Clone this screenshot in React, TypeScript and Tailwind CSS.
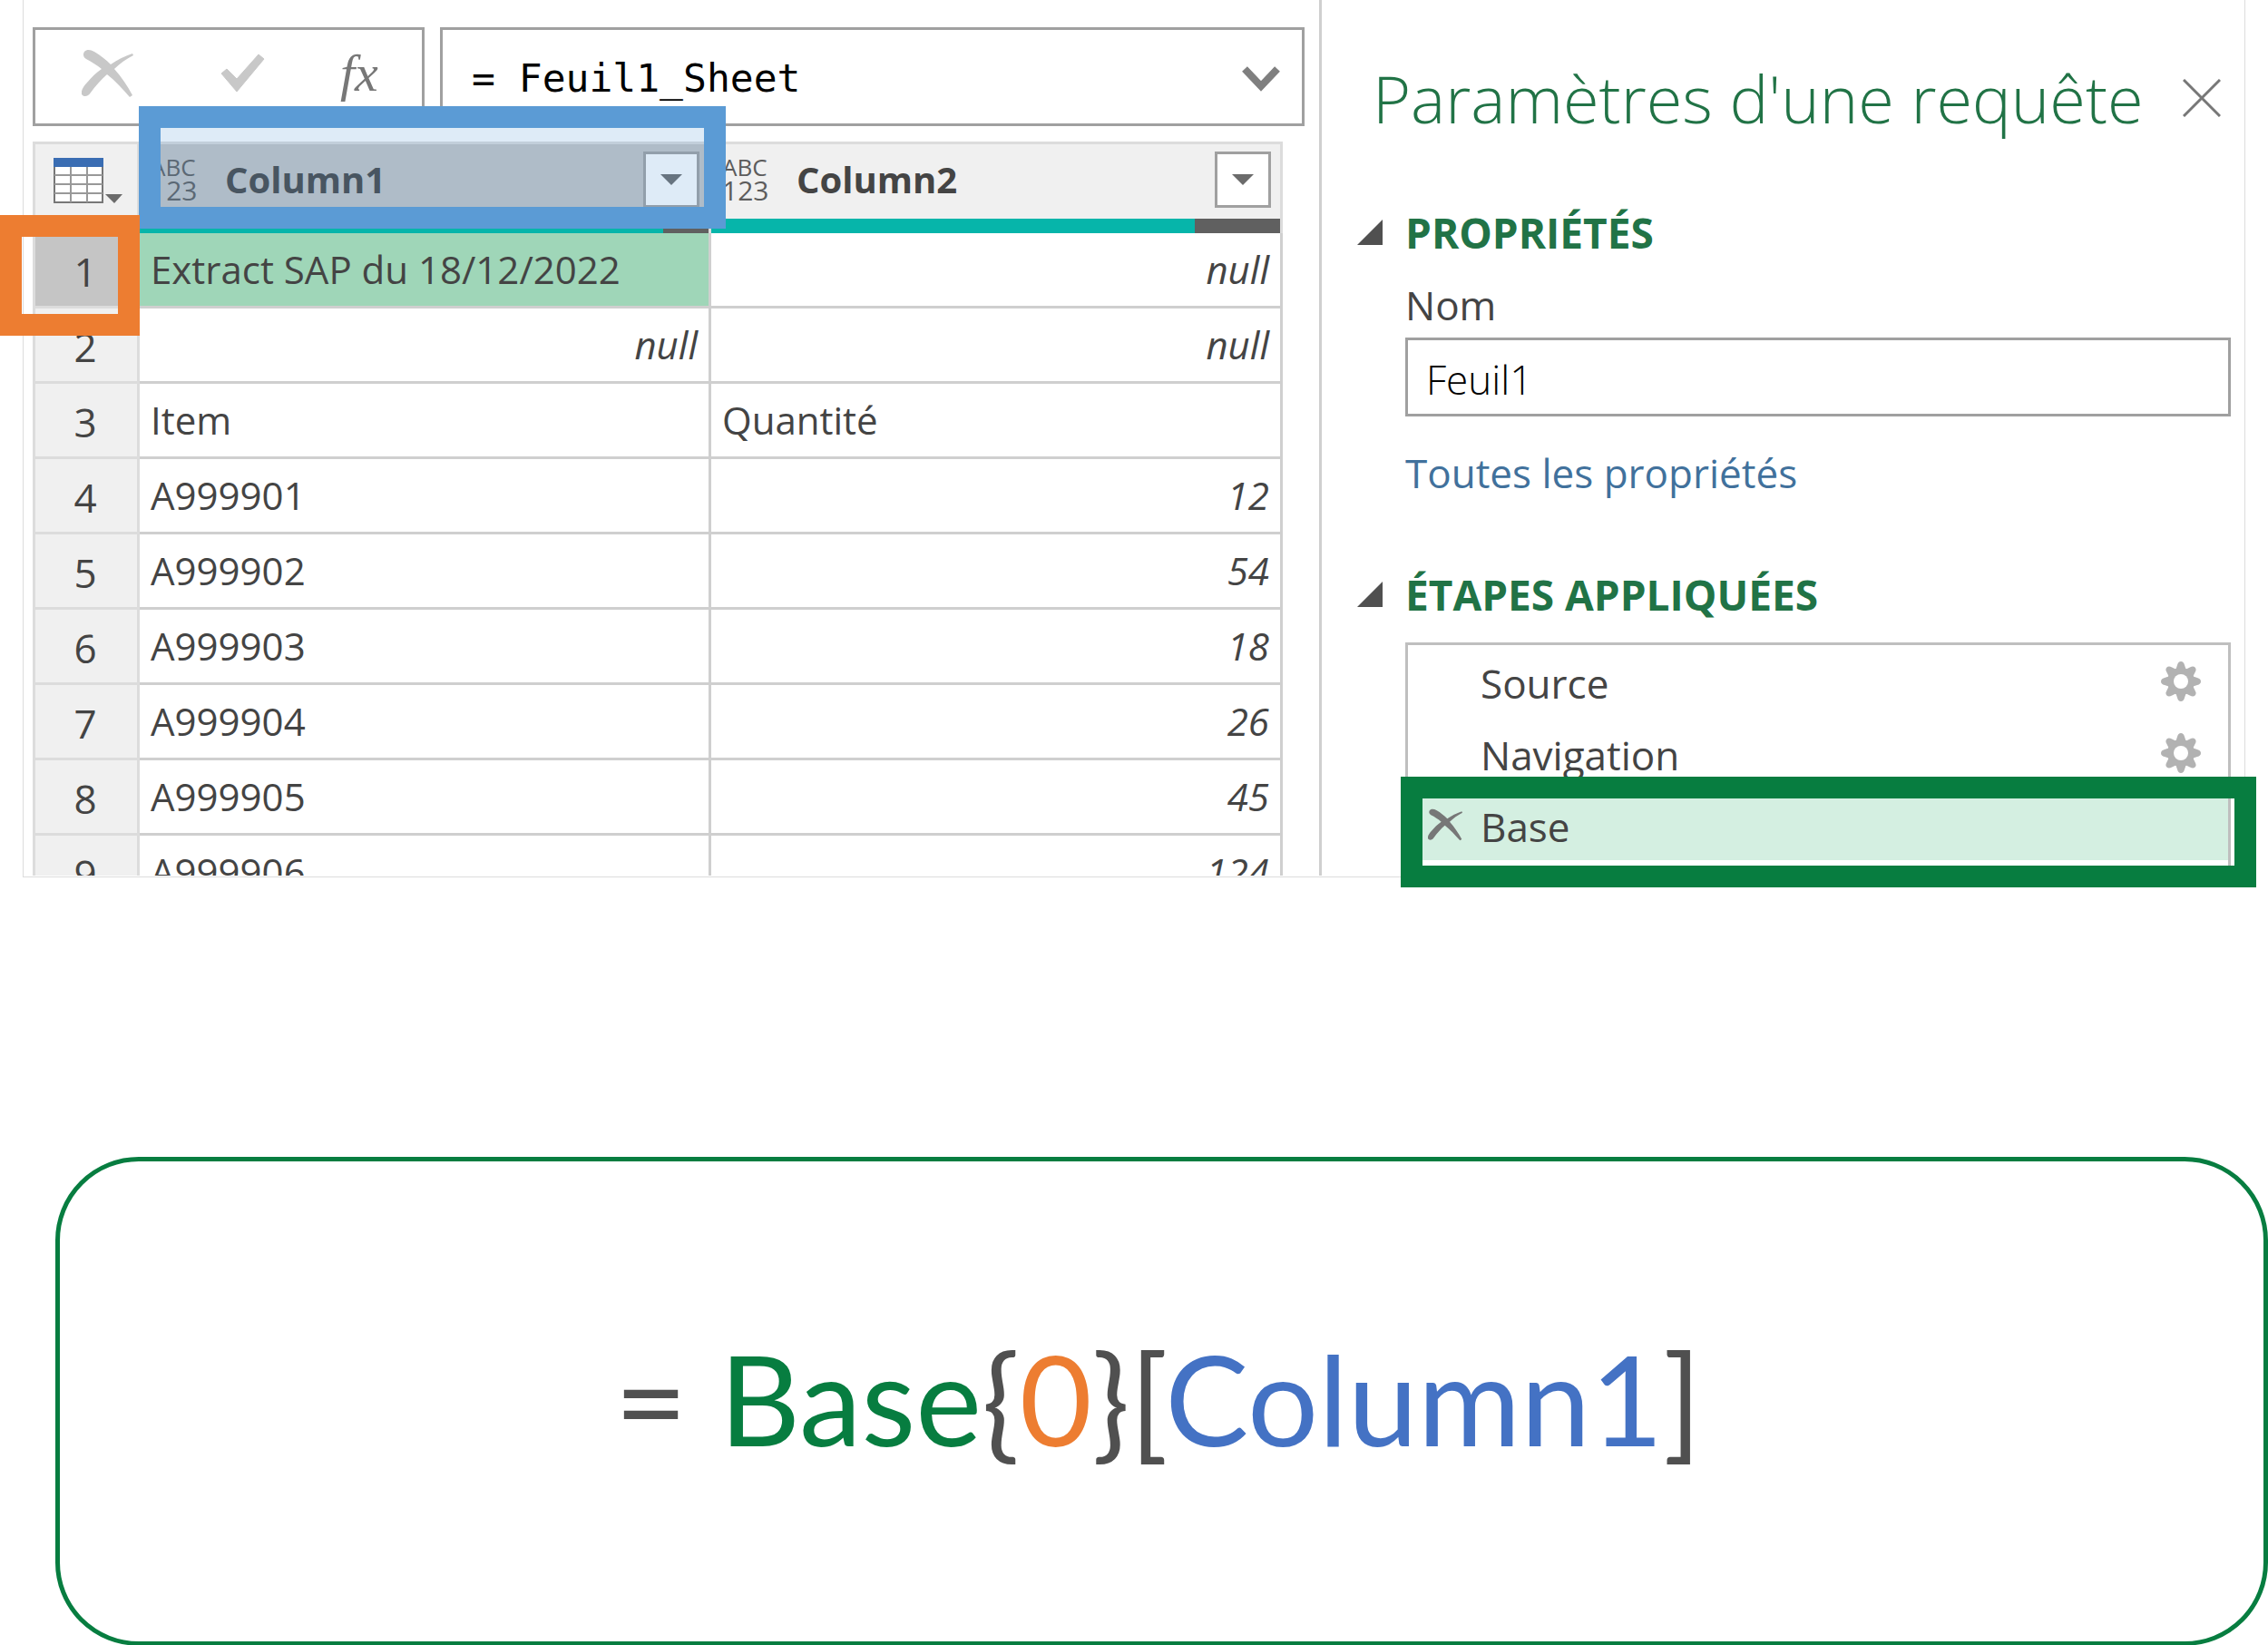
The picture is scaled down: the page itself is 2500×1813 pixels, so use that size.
import type { ReactNode } from "react";

const rows = [
  { id: 1, item: "Extract SAP du 18/12/2022", quantity: "null" },
  { id: 2, item: null, quantity: "null" },
  { id: 3, item: "Item", quantity: "Quantité", isText: true },
  { id: 4, item: "A999901", quantity: "12" },
  { id: 5, item: "A999902", quantity: "54" },
  { id: 6, item: "A999903", quantity: "18" },
  { id: 7, item: "A999904", quantity: "26" },
  { id: 8, item: "A999905", quantity: "45" },
  { id: 9, item: "A999906", quantity: "124" },
];

const CrossIcon = ({ className }: { className: string }) => (
  <svg viewBox="0 0 57 52" className={className} fill="currentColor" aria-hidden="true">
    <path d="M3 2C6 -1 10 0 14 2C21 6 27 11 32 16C39 11 47 7 56 4L57 6C49 10 42 15 36 21C44 30 50 39 56 50L53 52C45 43 37 34 28 27C21 33 15 40 10 47C7 52 2 52 0 49C-1 45 2 40 6 36C11 30 16 25 22 21C17 17 11 13 5 10C2 8 1 5 3 2Z" />
  </svg>
);

const GearIcon = () => (
  <svg viewBox="0 0 44 44" className="size-11" aria-hidden="true">
    <g fill="#b2b2b2">
      <circle cx="22" cy="22" r="15" />
      {[0, 45, 90, 135, 180, 225, 270, 315].map((angle) => (
        <path key={angle} d="M16 10L18 4Q19 0 22 0Q25 0 26 4L28 10Z" transform={`rotate(${angle} 22 22)`} />
      ))}
    </g>
    <circle cx="22" cy="22" r="8" fill="#fff" />
  </svg>
);

const TableIcon = () => (
  <svg viewBox="0 0 78 50" className="h-[50px] w-[78px]" aria-hidden="true">
    <rect x="1" y="1" width="53" height="48" fill="#fff" stroke="#777" strokeWidth="2" />
    <path d="M1 19H54M1 29H54M1 39H54M19 10V49M37 10V49" stroke="#999" strokeWidth="2" />
    <rect width="55" height="10" fill="#3a6db3" />
    <path d="M57 40H76L67 50Z" fill="#6b6b6b" />
  </svg>
);

const ColumnHeader = ({ name, selected, fill, children }: { name: string; selected?: boolean; fill: string; children?: ReactNode }) => (
  <th scope="col" className="relative border-r-3 border-[#dcdcdc] p-0 font-bold">
    <div className={`flex h-[85px] items-center border-t-3 border-[#dcdcdc] pr-[10px] pb-1 pl-3 ${selected ? "bg-[#c5c5c5]" : "bg-[#f0f0f0]"}`}>
      <span className="w-[82px] text-left font-normal text-[#5c5c5c]">
        <span className="block text-[26px] leading-6">ABC</span>
        <span className="block text-[30px] leading-7">123</span>
      </span>
      <span className="flex-1 text-left text-[40px]">{name}</span>
      <button aria-label={`Filtrer ${name}`} className="flex size-[62px] items-center justify-center border-3 border-[#a0a0a0] bg-white">
        <svg viewBox="0 0 24 12" className="h-3 w-6" aria-hidden="true">
          <path d="M0 0H24L12 12Z" fill="#6b6b6b" />
        </svg>
      </button>
    </div>
    <div className="flex h-4 bg-[#606060]">
      <div className={`bg-[#06b5aa] ${fill}`} />
    </div>
    {children}
  </th>
);

const DataTable = () => (
  <table className="mt-[17px] w-full table-fixed border-separate border-spacing-0 text-[42px] text-[#444]">
    <colgroup>
      <col className="w-[118px]" />
      <col />
      <col />
    </colgroup>
    <thead>
      <tr>
        <th className="border-3 border-b-0 border-[#dcdcdc] bg-[#f0f0f0] p-0 align-top">
          <button aria-label="Options de la table" className="flex h-20 items-center pl-5">
            <TableIcon />
          </button>
        </th>
        <ColumnHeader name="Column1" selected fill="w-[92%]">
          <div className="pointer-events-none absolute -top-[39px] -right-[19px] -left-px z-10 h-[135px] border-24 border-[#5b9bd5] bg-[#5b9bd5]/20" />
        </ColumnHeader>
        <ColumnHeader name="Column2" fill="w-[85%]" />
      </tr>
    </thead>
    <tbody>
      {rows.map((row) => (
        <tr key={row.id} className="h-[83px]">
          <th
            scope="row"
            className={`relative border-r-3 border-b-3 border-l-3 border-[#dcdcdc] p-0 text-[44px] font-normal ${row.id === 1 ? "bg-[#c5c5c5]" : "bg-[#f0f0f0]"}`}
          >
            <span className="block pt-1 pr-0.5 leading-[74px]">{row.id}</span>
            {row.id === 1 && (
              <div className="pointer-events-none absolute -top-5 -left-[39px] z-10 h-[133px] w-[154px] border-24 border-[#ed7d31]" />
            )}
          </th>
          <td
            className={`border-r-3 border-b-3 border-[#cfcfcf] px-3 py-0 leading-[78px] ${row.id === 1 ? "bg-[#9fd6b8]" : ""} ${row.item ? "" : "text-right italic"}`}
          >
            {row.item ?? "null"}
          </td>
          <td className={`border-r-3 border-b-3 border-[#cfcfcf] px-3 py-0 leading-[78px] ${row.isText ? "" : "text-right italic"}`}>
            {row.quantity}
          </td>
        </tr>
      ))}
    </tbody>
  </table>
);

const FormulaBar = () => (
  <div className="flex h-[109px] gap-[17px]">
    <div className="flex w-[432px] items-center border-3 border-[#a0a0a0] pb-2">
      <button aria-label="Annuler" className="ml-[51px] text-[#c8c8c8]">
        <CrossIcon className="h-[52px] w-[57px]" />
      </button>
      <button aria-label="Valider" className="ml-24">
        <svg viewBox="0 0 49 43" className="h-[43px] w-[49px]" aria-hidden="true">
          <path d="M1 22L7 17L18 28L42 1L48 6L18 42Z" fill="#c8c8c8" stroke="#c8c8c8" />
        </svg>
      </button>
      <button
        aria-label="Insérer une étape"
        className="ml-[83px] font-['Liberation_Serif',serif] text-[58px] leading-none text-[#777] italic"
      >
        fx
      </button>
    </div>
    <div className="flex flex-1 items-center border-3 border-[#a0a0a0] pt-1 pr-6 pl-8">
      <input
        aria-label="Formule"
        defaultValue="= Feuil1_Sheet"
        className="min-w-0 flex-1 font-['DejaVu_Sans_Mono',monospace] text-[43px] text-black outline-none"
      />
      <button aria-label="Développer">
        <svg viewBox="0 0 42 28" className="h-7 w-[42px]" aria-hidden="true">
          <path d="M3 3L21 22L39 3" fill="none" stroke="#7f7f7f" strokeWidth="8" />
        </svg>
      </button>
    </div>
  </div>
);

const SectionTitle = ({ children }: { children: ReactNode }) => (
  <h3 className="flex items-center text-[46px] leading-[60px] font-bold text-[#217346]">
    <svg viewBox="0 0 28 28" className="mr-[25px] size-7" aria-hidden="true">
      <path d="M28 0V28H0Z" fill="#505050" />
    </svg>
    {children}
  </h3>
);

const QuerySettings = () => (
  <aside className="min-w-0 flex-1 border-r border-[#dcdcdc] pr-[15px] pl-[39px] text-[44px] text-[#444]">
    <div className="flex items-center justify-between pt-[54px] pr-[11px] pl-[17px]">
      <h2 className="text-[72px] leading-[108px] font-light whitespace-nowrap text-[#217346]">Paramètres d'une requête</h2>
      <button aria-label="Fermer">
        <svg viewBox="0 0 42 42" className="size-[42px]" aria-hidden="true">
          <path d="M1 1L41 41M41 1L1 41" stroke="#777" strokeWidth="3" />
        </svg>
      </button>
    </div>
    <div className="mt-[64px]">
      <SectionTitle>PROPRIÉTÉS</SectionTitle>
      <div className="pl-[53px]">
        <label htmlFor="query-name" className="mt-5 block leading-[60px]">
          Nom
        </label>
        <input
          id="query-name"
          defaultValue="Feuil1"
          className="mt-[6px] block h-[87px] w-full border-3 border-[#a0a0a0] px-5 pt-1 font-light text-black outline-none"
        />
        <a href="#" className="mt-8 block leading-[60px] text-[#41719c]">
          Toutes les propriétés
        </a>
      </div>
    </div>
    <div className="mt-[74px]">
      <SectionTitle>ÉTAPES APPLIQUÉES</SectionTitle>
      <ul className="mt-[23px] ml-[53px] border-3 border-b-0 border-[#bfbfbf] pb-[18px]">
        {["Source", "Navigation"].map((step) => (
          <li key={step} className="flex h-[79px] items-center justify-between pr-[30px] pl-20">
            <span className="pt-1">{step}</span>
            <button aria-label={`Paramètres de ${step}`}>
              <GearIcon />
            </button>
          </li>
        ))}
        <li className="relative flex h-[79px] items-center bg-[#d4efe1] pl-[22px]">
          <button aria-label="Supprimer Base" className="w-[58px] text-[#777]">
            <CrossIcon className="h-9 w-[38px]" />
          </button>
          <span className="pt-1">Base</span>
          <div className="pointer-events-none absolute -top-[13px] -right-[31px] -left-2 h-[122px] border-24 border-[#077d40]" />
        </li>
      </ul>
    </div>
  </aside>
);

const App = () => {
  return (
    <main className="bg-white font-['Open_Sans','Noto_Sans',sans-serif]">
      <div className="mr-[25px] ml-[25px] flex border-b border-l border-[#dcdcdc]">
        <section className="h-[965px] w-[1431px] shrink-0 overflow-y-clip border-r-3 border-[#cfcfcf] pt-[30px] pr-4 pl-[10px]">
          <FormulaBar />
          <div className="pr-6">
            <DataTable />
          </div>
        </section>
        <QuerySettings />
      </div>

      <section className="mt-[308px] ml-[61px] flex h-[539px] items-center justify-center rounded-[92px] border-5 border-[#077d40] pr-2 pb-2">
        <p className="font-['Lato',sans-serif] text-[138px] whitespace-nowrap text-[#505050]">
          = <span className="text-[#077d40]">Base</span>
          {"{"}
          <span className="text-[#ed7d31]">0</span>
          {"}["}
          <span className="text-[#4472c4]">Column1</span>]
        </p>
      </section>
    </main>
  );
};

export default App;
